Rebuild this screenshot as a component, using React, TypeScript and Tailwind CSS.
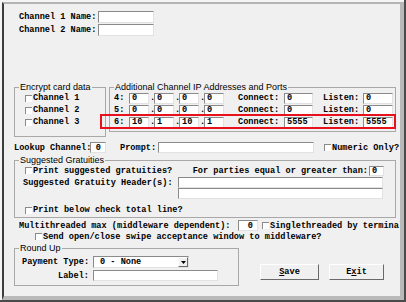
import React from "react";

const MONO = "font-['Liberation_Mono',monospace] font-bold text-[8.6px] leading-[10px] whitespace-nowrap";
const SANS = "font-['Liberation_Sans',Arial,sans-serif] font-normal text-[9px] leading-[9px]";

type FieldProps = { className?: string; value?: string; right?: boolean };

function Field({ className = "", value = "", right = false }: FieldProps) {
  return (
    <div
      className={`flex shrink-0 items-center bg-white border border-t-[#8a8a8a] border-l-[#8a8a8a] border-b-[#e2e2e2] border-r-[#e2e2e2] ${
        right ? "justify-end pr-[4px]" : "pl-[2px]"
      } ${className}`}
    >
      {value}
    </div>
  );
}

function Check() {
  return <span className="block w-[7px] h-[7px] shrink-0 bg-white border-t border-l border-[#8a8a8a]" />;
}

function Group({ title, className = "", children }: { title: string; className?: string; children?: React.ReactNode }) {
  return (
    <fieldset className={`shrink-0 border border-[#a8a8a8] ${className}`}>
      <legend className={`${SANS} ml-[4px] px-[1px]`}>{title}</legend>
      {children}
    </fieldset>
  );
}

function IpRow({ n, ip, connect, listen }: { n: string; ip: string[]; connect: string; listen: string }) {
  return (
    <div className="flex items-center h-[12px]">
      <span className="w-[15px] shrink-0">{n}:</span>
      <Field className="w-[20px] h-[11px]" value={ip[0]} />
      <span className="w-[5px] shrink-0 pl-[1px]">.</span>
      <Field className="w-[20px] h-[11px]" value={ip[1]} />
      <span className="w-[5px] shrink-0 pl-[1px]">.</span>
      <Field className="w-[20px] h-[11px]" value={ip[2]} />
      <span className="w-[5px] shrink-0 pl-[1px]">.</span>
      <Field className="w-[20px] h-[11px]" value={ip[3]} />
      <span className="ml-[14px] w-[46px] shrink-0">Connect:</span>
      <Field className="w-[29px] h-[11px]" value={connect} />
      <span className="ml-[10px] w-[40px] shrink-0">Listen:</span>
      <Field className="w-[30px] h-[11px]" value={listen} />
    </div>
  );
}

function Btn({ w, children }: { w: string; children: React.ReactNode }) {
  return (
    <button
      className={`h-[16px] flex items-center justify-center bg-[#f0f0f0] border border-t-white border-l-white border-r-[#6a6a6a] border-b-[#6a6a6a] ${w}`}
    >
      {children}
    </button>
  );
}

export default function App() {
  return (
    <div className="w-[406px] h-[302px] flex bg-[#f4f4f4] pl-[2px] pt-[2px] border-r-2 border-b-2 border-[#4a4a4a]">
      <div
        className={`relative flex-1 overflow-hidden bg-[#f0f0f0] text-black border-l-2 border-l-[#3c3c3c] border-t-2 border-t-[#b4b4b4] border-r-4 border-r-[#b9b9b9] border-b-4 border-b-[#b9b9b9] ${MONO}`}
      >
        <div className="flex flex-col pl-[10px]">
          <div className="mt-[7px] ml-[5px] flex items-center h-[12px]">
            <span className="w-[79px] shrink-0">Channel 1 Name:</span>
            <Field className="w-[56px] h-[12px]" />
          </div>
          <div className="mt-[1px] ml-[5px] flex items-center h-[12px]">
            <span className="w-[79px] shrink-0">Channel 2 Name:</span>
            <Field className="w-[56px] h-[12px]" />
          </div>

          <div className="mt-[47px] flex items-start">
            <Group title="Encrypt card data" className="w-[92px] h-[54px]">
              <div className="pl-[10px] flex flex-col">
                {["Channel 1", "Channel 2", "Channel 3"].map((c) => (
                  <div key={c} className="flex items-center h-[12px]">
                    <Check />
                    <span className="ml-[1px]">{c}</span>
                  </div>
                ))}
              </div>
            </Group>
            <Group title="Additional Channel IP Addresses and Ports" className="ml-[3px] w-[287px] h-[49px]">
              <div className="pl-[4px] flex flex-col">
                <IpRow n="4" ip={["0", "0", "0", "0"]} connect="0" listen="0" />
                <IpRow n="5" ip={["0", "0", "0", "0"]} connect="0" listen="0" />
                <IpRow n="6" ip={["10", "1", "10", "1"]} connect="5555" listen="5555" />
              </div>
            </Group>
          </div>

          <div className="mt-[5px] flex items-center h-[11px]">
            <span className="w-[76px] shrink-0">Lookup Channel:</span>
            <Field className="w-[16px] h-[11px]" value="0" right />
            <span className="ml-[14px] w-[38px] shrink-0">Prompt:</span>
            <Field className="w-[156px] h-[11px]" />
            <span className="ml-[10px]">
              <Check />
            </span>
            <span className="ml-[1px]">Numeric Only?</span>
          </div>

          <Group title="Suggested Gratuities" className="mt-[3px] w-[382px] h-[62px]">
            <div className="flex items-center h-[11px] pl-[10px] pr-[11px]">
              <Check />
              <span className="ml-[1px]">Print suggested gratuities?</span>
              <span className="ml-auto">For parties equal or greater than:</span>
              <Field className="ml-[1px] w-[15px] h-[10px]" value="0" />
            </div>
            <div className="mt-[1px] flex items-center h-[11px] pl-[8px]">
              <span className="w-[155px] shrink-0">Suggested Gratuity Header(s):</span>
              <Field className="w-[205px] h-[11px]" />
            </div>
            <div className="flex items-center h-[11px] pl-[163px]">
              <Field className="w-[205px] h-[11px]" />
            </div>
            <div className="mt-[6px] flex items-center h-[10px] pl-[10px]">
              <Check />
              <span className="ml-[1px]">Print below check total line?</span>
            </div>
          </Group>

          <div className="mt-[2px] ml-[5px] flex items-center h-[11px]">
            <span className="w-[219px] shrink-0">Multithreaded max (middleware dependent):</span>
            <Field className="w-[20px] h-[11px]" value="0" right />
            <span className="ml-[4px]">
              <Check />
            </span>
            <span className="ml-[1px]">Singlethreaded by terminal</span>
          </div>
          <div className="ml-[21px] flex items-center h-[11px]">
            <Check />
            <span className="ml-[1px]">Send open/close swipe acceptance window to middleware?</span>
          </div>

          <div className="mt-[2px] flex items-start">
            <Group title="Round Up" className="w-[225px] h-[42px]">
              <div className="mt-[3px] flex items-center h-[12px]">
                <span className="ml-[7px] w-[67px] shrink-0 text-right">Payment Type:</span>
                <div className="ml-[4px] w-[96px] h-[12px] shrink-0 flex items-center bg-white border border-t-[#8a8a8a] border-l-[#8a8a8a] border-b-[#e2e2e2] border-r-[#e2e2e2]">
                  <span className="pl-[6px] flex-1">0 - None</span>
                  <span className="w-[10px] h-[10px] flex items-center justify-center bg-[#f0f0f0] border border-t-white border-l-white border-r-[#6a6a6a] border-b-[#6a6a6a]">
                    <svg width="5" height="3" viewBox="0 0 5 3">
                      <path d="M0 0h5L2.5 3z" fill="#000" />
                    </svg>
                  </span>
                </div>
              </div>
              <div className="mt-[2px] flex items-center h-[11px]">
                <span className="ml-[7px] w-[67px] shrink-0 text-right">Label:</span>
                <Field className="ml-[4px] w-[125px] h-[11px]" />
              </div>
            </Group>
            <div className="ml-[21px] mt-[20px] flex gap-[10px]">
              <Btn w="w-[59px]">
                <span className="underline">S</span>ave
              </Btn>
              <Btn w="w-[55px]">
                E<span className="underline">x</span>it
              </Btn>
            </div>
          </div>
        </div>

        <div className="absolute left-[96px] top-[110px] w-[296px] h-[15px] border-2 border-[#e8101a]" />
      </div>
    </div>
  );
}
